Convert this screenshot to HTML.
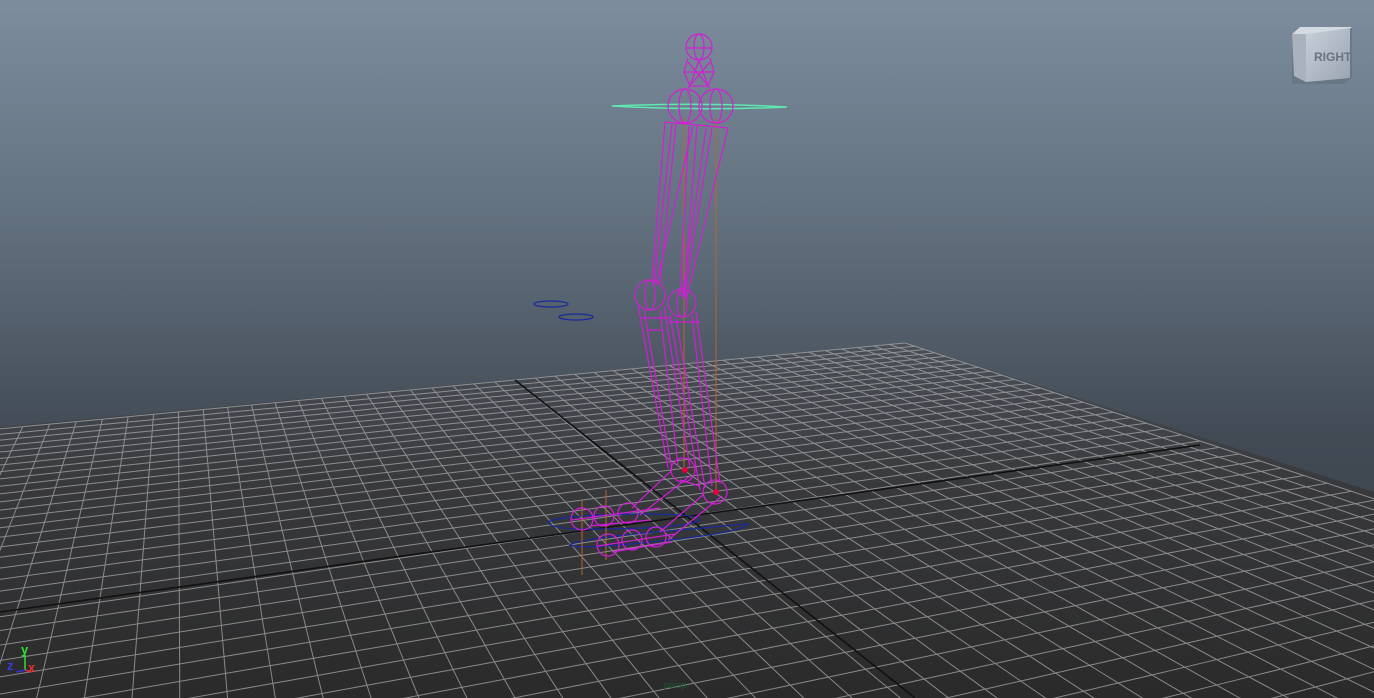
<!DOCTYPE html>
<html><head><meta charset="utf-8"><style>
html,body{margin:0;padding:0;width:1374px;height:698px;overflow:hidden;background:#3e4750;}
svg{display:block;position:absolute;left:0;top:0}
</style></head><body>
<svg id="s" width="1374" height="698" viewBox="0 0 1374 698" xmlns="http://www.w3.org/2000/svg">
<defs>
<linearGradient id="bg" x1="0" y1="0" x2="0" y2="1">
<stop offset="0" stop-color="#7d8d9e"/><stop offset="0.35" stop-color="#5f6d7b"/><stop offset="0.62" stop-color="#424b55"/><stop offset="1" stop-color="#353b42"/>
</linearGradient>
<linearGradient id="pl" gradientUnits="userSpaceOnUse" x1="0" y1="343" x2="0" y2="698">
<stop offset="0" stop-color="#4a5058"/><stop offset="0.4" stop-color="#38393c"/><stop offset="1" stop-color="#2a2a2a"/>
</linearGradient>
<linearGradient id="cb" x1="0" y1="0" x2="1" y2="1">
<stop offset="0" stop-color="#c8d0da"/><stop offset="1" stop-color="#9aa4b0"/>
</linearGradient>
</defs>
<rect width="1374" height="698" fill="url(#bg)"/>
<polygon points="905,343 0,427 0,698 1374,698 1374,492" fill="url(#pl)"/>
<g id="grid" stroke="#a8a8a8" stroke-width="1" opacity="0.75"></g>
<g stroke="#111" stroke-width="1.6">
<line x1="515" y1="380" x2="915" y2="698"/>
<line x1="0" y1="612" x2="1200" y2="445"/>
</g>
<g fill="none" stroke="#1a2a9a" stroke-width="1.3">
<ellipse cx="551" cy="304" rx="17" ry="3"/>
<ellipse cx="576" cy="317" rx="17" ry="3"/>
<path d="M548 522 Q560 515 640 514 Q700 514 700 520 Q690 528 600 529 Q550 530 548 522Z"/>
<path d="M570 545 Q580 538 680 530 Q745 524 748 524 Q740 533 660 541 Q580 550 570 545Z"/>
</g>
<path d="M612 106 Q700 102 787 107 Q700 111 612 106Z" fill="none" stroke="#5fe8b0" stroke-width="1.5"/>
<g stroke="#b8642a" stroke-width="1">
<line x1="684" y1="118" x2="684" y2="470"/>
<line x1="716" y1="118" x2="716" y2="490"/>
<line x1="582" y1="500" x2="582" y2="575"/>
<line x1="606" y1="490" x2="606" y2="560"/>
</g>
<g fill="none" stroke="#d21ed6" stroke-width="1.2">
<circle cx="699" cy="47" r="13"/>
<ellipse cx="699" cy="47" rx="5" ry="13"/>
<line x1="686" y1="48" x2="712" y2="48"/>
<path d="M688 58 L684 72 L690 86 L699 60 L708 86 L714 72 L710 58 M684 72 L714 72 M690 86 L708 86 M688 62 L710 88 M710 62 L688 88"/>
<circle cx="685" cy="106" r="17"/><ellipse cx="685" cy="106" rx="6" ry="17"/>
<circle cx="716" cy="106" r="17"/><ellipse cx="716" cy="106" rx="6" ry="17"/>
<path d="M665 122 L728 128 M665 122 L652 282 M672 124 L654 284 M676 124 L660 284 M693 126 L656 286 M689 126 L680 296 M697 126 L684 296 M712 128 L684 298 M728 128 L686 300 M706 128 L682 298"/>
<circle cx="650" cy="295" r="15"/><ellipse cx="650" cy="295" rx="5" ry="15"/>
<circle cx="682" cy="303" r="14"/><ellipse cx="682" cy="303" rx="5" ry="14"/>
<path d="M638 305 L668 468 M644 310 L672 470 M660 310 L678 466 M664 306 L690 468 M642 318 L670 318 M670 315 L700 490 M676 318 L705 488 M692 316 L712 486 M696 312 L720 484 M668 322 L700 322 M648 330 L662 330"/>
<circle cx="683" cy="470" r="12"/><circle cx="715" cy="492" r="12"/>
<path d="M672 470 L632 508 M690 476 L640 515 M704 494 L660 532 M722 496 L668 540 M680 480 L700 486"/>
<circle cx="582" cy="519" r="11"/><circle cx="604" cy="516" r="10"/><circle cx="628" cy="513" r="10"/>
<circle cx="608" cy="545" r="11"/><circle cx="632" cy="540" r="10"/><circle cx="656" cy="537" r="10"/>
<path d="M572 520 L660 508 M590 526 L650 520 M598 546 L675 534 M612 552 L672 542"/>
</g>
<g fill="#e00040"><circle cx="685" cy="470" r="3"/><circle cx="716" cy="492" r="3"/></g>
<polygon points="1292,33 1300,27 1352,27 1352,78 1344,84 1292,84" fill="#5a6470" opacity="0.4"/>
<polygon points="1300,27 1352,27 1344,34 1292,34" fill="#d4dae2"/>
<polygon points="1306,34 1350,28 1350,78 1306,82" fill="url(#cb)"/>
<polygon points="1292,34 1306,34 1306,82 1294,76" fill="#a9b2bd"/>
<text x="1314" y="61" font-family="Liberation Sans, sans-serif" font-size="12" font-weight="bold" fill="#6a7380">RIGHT</text>
<g stroke-width="1.5">
<line x1="25" y1="670" x2="25" y2="655" stroke="#30e030"/>
<line x1="25" y1="670" x2="32" y2="672" stroke="#e03030"/>
<line x1="25" y1="670" x2="16" y2="672" stroke="#3030e0"/>
</g>
<text x="21" y="654" font-family="Liberation Sans, sans-serif" font-size="13" font-weight="bold" fill="#30e030">y</text>
<text x="28" y="672" font-family="Liberation Sans, sans-serif" font-size="13" font-weight="bold" fill="#e03030">x</text>
<text x="7" y="670" font-family="Liberation Sans, sans-serif" font-size="13" font-weight="bold" fill="#3040e0">z</text>
<text x="664" y="688" font-family="Liberation Sans, sans-serif" font-size="9" fill="#1c5a2c">persp</text>
</svg>
<script>
(function(){
function solve(src,dst){
 var A=[],b=[];
 for(var i=0;i<4;i++){var x=src[i][0],y=src[i][1],X=dst[i][0],Y=dst[i][1];
  A.push([x,y,1,0,0,0,-x*X,-y*X]);b.push(X);
  A.push([0,0,0,x,y,1,-x*Y,-y*Y]);b.push(Y);}
 var n=8;for(var c=0;c<n;c++){var p=c;for(var r=c+1;r<n;r++)if(Math.abs(A[r][c])>Math.abs(A[p][c]))p=r;
  var t=A[c];A[c]=A[p];A[p]=t;t=b[c];b[c]=b[p];b[p]=t;
  for(var r=0;r<n;r++){if(r==c)continue;var f=A[r][c]/A[c][c];for(var k=c;k<n;k++)A[r][k]-=f*A[c][k];b[r]-=f*b[c];}}
 var h=[];for(var i=0;i<n;i++)h.push(b[i]/A[i][i]);h.push(1);return h;}
var H=solve([[0,0],[0.5,0],[0,0.5],[0.5,0.5]],[[905,343],[515,380],[1200,441],[681,517]]);
function P(u,v){var w=H[6]*u+H[7]*v+1;return [(H[0]*u+H[1]*v+H[2])/w,(H[3]*u+H[4]*v+H[5])/w,w];}
var g=document.getElementById('grid'),N=44;
var ns='http://www.w3.org/2000/svg';
function line(a,b){var l=document.createElementNS(ns,'polyline');
 var pts=[];for(var k=0;k<=40;k++){var t=k/40;var q=P(a[0]+(b[0]-a[0])*t,a[1]+(b[1]-a[1])*t);if(q[2]<=0)break;pts.push(q[0].toFixed(1)+','+q[1].toFixed(1));}
 l.setAttribute('points',pts.join(' '));l.setAttribute('fill','none');g.appendChild(l);}
for(var i=0;i<=N;i++){var t=i/N;line([t,0],[t,1]);line([0,t],[1,t]);}
})();
</script>
</body></html>
